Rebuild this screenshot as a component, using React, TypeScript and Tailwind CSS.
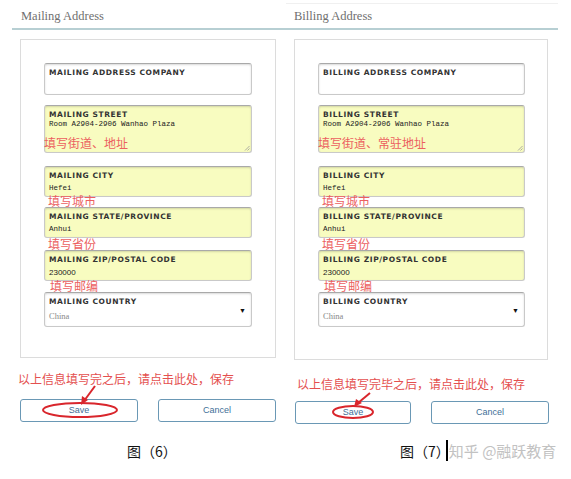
import React from "react";

type FieldProps = {
  label: string;
  value?: string;
  h: string;
  yellow?: boolean;
  valueGap?: string;
  valueClass?: string;
  select?: boolean;
  grip?: boolean;
  hint?: string;
  hintClass?: string;
  className?: string;
};

function Field({ label, value, h, yellow, valueGap = "mt-[3px]", valueClass = "", select, grip, hint, hintClass = "", className = "" }: FieldProps) {
  return (
    <div
      className={`relative ${h} ${className} rounded-[3px] border border-[#c9c9c9] border-t-[#a9a9a9] shadow-[inset_0_1px_2px_rgba(0,0,0,0.15)] ${yellow ? "bg-[#f8fcc0]" : "bg-white"} px-[4px] pt-[4px]`}
    >
      <div className="font-['DejaVu_Sans',sans-serif] text-[7.5px] font-bold leading-[9px] tracking-[0.6px] text-[#333]">{label}</div>
      {value && <div className={`${valueGap} ${valueClass} leading-[9px]`}>{value}</div>}
      {select && <div className="absolute right-[5px] top-[14px] text-[7px] leading-none text-[#111]">▼</div>}
      {grip && (
        <svg className="absolute bottom-[1px] right-[1px]" width="6" height="6" viewBox="0 0 6 6">
          <path d="M5.5 1 L1 5.5 M5.5 3.5 L3.5 5.5" stroke="#999" strokeWidth="0.8" />
        </svg>
      )}
      {hint && (
        <div className={`absolute whitespace-nowrap font-['Noto_Sans_CJK_SC',sans-serif] text-[12px] leading-none text-[#ec5f5f] ${hintClass}`}>{hint}</div>
      )}
    </div>
  );
}

const mono = "font-['Liberation_Mono',monospace] text-[7.5px] text-[#222]";
const serif = "font-['Liberation_Serif',serif] text-[8.5px] text-[#888]";
const sans = "font-['Liberation_Sans',sans-serif] text-[8px] text-[#222]";

function Column({ prefix, cardW, inputW, streetHint, save, left }: { prefix: string; cardW: string; inputW: string; streetHint: string; save: string; left: boolean }) {
  return (
    <div className="flex flex-col">
      <div
        className={`border-b-2 border-[#b7cfd3] font-['Liberation_Serif',serif] text-[12.5px] leading-[16px] text-[#6f6f6f] ${
          left ? "h-[30px] pl-[9px] pt-[8px]" : "h-[26px] pl-[8px] pt-[4px]"
        }`}
      >
        {prefix === "MAILING" ? "Mailing Address" : "Billing Address"}
      </div>
      <div className={`ml-[8px] mt-[9px] ${cardW} border border-[#dcdcdc] bg-white pl-[23px] pt-[23px] ${left ? "pb-[30px]" : "pb-[32px]"}`}>
        <div className={`flex ${inputW} flex-col`}>
          <Field label={`${prefix} ADDRESS COMPANY`} h="h-[32px]" />
          <Field
            className="mt-[10px]"
            label={`${prefix} STREET`}
            value="Room A2904-2906 Wanhao Plaza"
            valueGap="mt-[1px]"
            valueClass={mono}
            h="h-[48px]"
            yellow
            grip
            hint={streetHint}
            hintClass="left-[-1px] top-[31px]"
          />
          <Field className="mt-[13px]" label={`${prefix} CITY`} value="Hefei" valueGap="mt-[4px]" valueClass={mono} h="h-[31px]" yellow hint="填写城市" hintClass="left-[3px] top-[28px]" />
          <Field className="mt-[10px]" label={`${prefix} STATE/PROVINCE`} value="Anhui" valueGap="mt-[4px]" valueClass={mono} h="h-[31px]" yellow hint="填写省份" hintClass="left-[3px] top-[30px]" />
          <Field className="mt-[12px]" label={`${prefix} ZIP/POSTAL CODE`} value="230000" valueGap="mt-[4px]" valueClass={sans} h="h-[31px]" yellow hint="填写邮编" hintClass="left-[5px] top-[29px]" />
          <Field className="mt-[11px]" label={`${prefix} COUNTRY`} value="China" valueGap="mt-[6px]" valueClass={serif} h="h-[35px]" select />
        </div>
      </div>
      <div className={`font-['Noto_Sans_CJK_SC',sans-serif] text-[12px] leading-none text-[#e4504f] ${left ? "ml-[6px] mt-[15px]" : "ml-[11px] mt-[18px]"}`}>
        {save}
      </div>
      <div className={`relative flex ${left ? "ml-[8px] mt-[14px] gap-[20px]" : "ml-[9px] mt-[11px] gap-[20px]"}`}>
        <button className={`flex h-[23px] ${left ? "w-[118px]" : "w-[116px]"} items-center justify-center rounded-[3px] border border-[#6a98b5] bg-white font-['Liberation_Sans',sans-serif] text-[9px] text-[#3f6f98]`}>
          Save
        </button>
        <button className="flex h-[23px] w-[118px] items-center justify-center rounded-[3px] border border-[#6a98b5] bg-white font-['Liberation_Sans',sans-serif] text-[9px] text-[#3f6f98]">
          Cancel
        </button>
        {left ? (
          <svg className="pointer-events-none absolute left-[18px] top-[-16px]" width="100" height="40" viewBox="0 0 100 40">
            <ellipse cx="42" cy="27" rx="37" ry="7" fill="none" stroke="#d9262c" strokeWidth="2" />
            <path d="M57 3 L46 18" stroke="#d9262c" strokeWidth="2" />
            <path d="M43 22 L44 13 L50 17 Z" fill="#d9262c" />
          </svg>
        ) : (
          <svg className="pointer-events-none absolute left-[30px] top-[-20px]" width="100" height="40" viewBox="0 0 100 40">
            <ellipse cx="28" cy="31" rx="20" ry="6" fill="none" stroke="#d9262c" strokeWidth="2" />
            <path d="M45 12 L33 22" stroke="#d9262c" strokeWidth="2" />
            <path d="M29 26 L31 18 L37 22 Z" fill="#d9262c" />
          </svg>
        )}
      </div>
    </div>
  );
}

export default function App() {
  return (
    <div className="relative h-[479px] w-[571px] overflow-hidden bg-white">
      <div className="flex pl-[12px]">
        <div className="w-[274px]">
          <Column prefix="MAILING" cardW="w-[256px]" inputW="w-[208px]" streetHint="填写街道、地址" save="以上信息填写完之后，请点击此处，保存" left />
        </div>
        <div className="mt-[3px] w-[272px] border-t border-[#f0f0f0]">
          <Column prefix="BILLING" cardW="w-[254px]" inputW="w-[207px]" streetHint="填写街道、常驻地址" save="以上信息填写完毕之后，请点击此处，保存" left={false} />
        </div>
      </div>
      <div className="mt-[16px] flex items-center font-['Noto_Sans_CJK_SC',sans-serif] text-[14px] leading-none text-[#111]">
        <div className="ml-[127px] w-[273px]">图（6）</div>
        <div>图（7）</div>
        <div className="-ml-[4px] h-[21px] w-[2px] bg-black" />
        <div className="ml-[1px] text-[15px] text-[#c2c2c2]">知乎 @融跃教育</div>
      </div>
    </div>
  );
}
